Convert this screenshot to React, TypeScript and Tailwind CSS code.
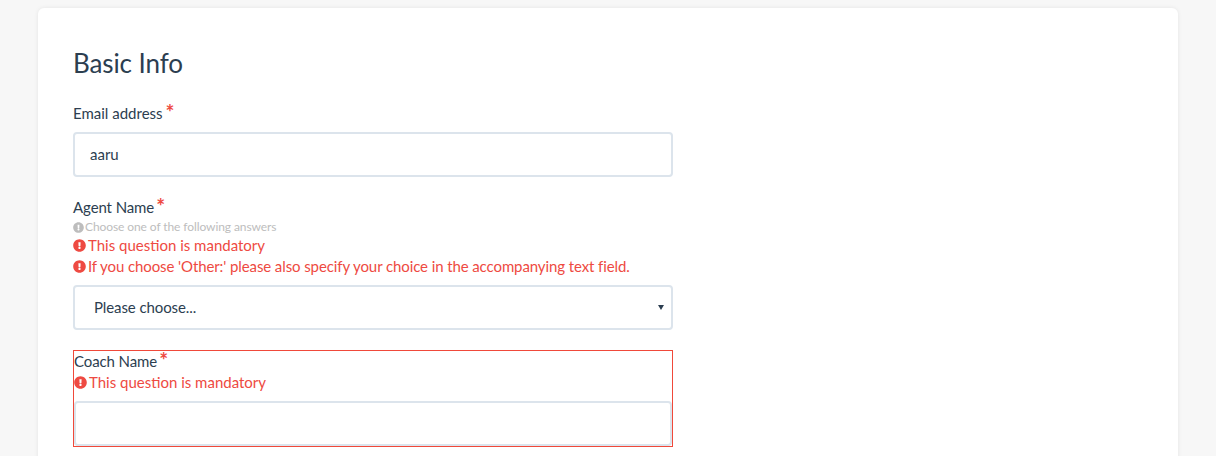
import { FaExclamationCircle } from "react-icons/fa";

function Req({ tight }: { tight?: boolean }) {
  return (
    <span className={tight ? "ml-[2px] h-[14px] -mt-[1px] text-[21px] leading-[20px] font-bold text-[#ee4a42]" : "ml-[3px] h-[14px] -mt-[1px] text-[21px] leading-[20px] font-bold text-[#ee4a42]"}>
      *
    </span>
  );
}

function Err({ children, tight }: { children: React.ReactNode; tight?: boolean }) {
  return (
    <div className={tight ? "flex items-center h-[21px] text-[15px] text-[#ee4a42] tracking-[-0.1px]" : "flex items-center h-[21px] text-[15px] text-[#ee4a42]"}>
      <FaExclamationCircle className="w-[13px] h-[13px] mr-[2px] shrink-0" />
      <span>{children}</span>
    </div>
  );
}

export default function App() {
  return (
    <div className="h-[456px] overflow-hidden bg-[#f7f7f7] pt-[8px] pl-[38px] pr-[38px] font-['Lato','Noto_Sans',sans-serif] text-[#2c3e50]">
      <div className="h-[600px] bg-white rounded-t-[6px] shadow-[0_0_4px_rgba(0,0,0,0.08)] pl-[35px] pt-[35px]">
        <div className="w-[600px]">
          <h1 className="text-[26px] leading-[40px] h-[40px] tracking-[-0.1px]">Basic Info</h1>
          <div className="mt-[20px] h-[20px] text-[15px] leading-[20px] flex items-start">
            <span>Email address</span>
            <Req />
          </div>
          <div className="mt-[9px] h-[45px] border-2 border-[#dce4ec] rounded-[4px] pl-[15px] flex items-center text-[15px]">
            aaru
          </div>
          <div className="mt-[20px] h-[20px] text-[15px] leading-[20px] flex items-start">
            <span className="tracking-[-0.1px]">Agent Name</span>
            <Req tight />
          </div>
          <div className="flex items-center h-[18px] pt-[2px] text-[12px] tracking-[-0.09px] text-[#bdbdbd]">
            <FaExclamationCircle className="w-[11px] h-[11px] mr-[1px] shrink-0" />
            <span>Choose one of the following answers</span>
          </div>
          <Err>This question is mandatory</Err>
          <Err tight>If you choose 'Other:' please also specify your choice in the accompanying text field.</Err>
          <div className="mt-[8px] h-[45px] border-2 border-[#dce4ec] rounded-[4px] pl-[19px] pr-[7px] flex items-center justify-between text-[15px] tracking-[-0.1px]">
            <span>Please choose...</span>
            <span className="w-0 h-0 border-l-[3px] border-r-[3px] border-t-[5px] border-l-transparent border-r-transparent border-t-[#2c3e50]" />
          </div>
          <div className="mt-[20px] h-[97px] border border-[#f0493a]">
            <div className="h-[20px] text-[15px] leading-[20px] flex items-start">
              <span className="tracking-[-0.1px]">Coach Name</span>
              <Req tight />
            </div>
            <div className="mt-[1px]">
              <Err>This question is mandatory</Err>
            </div>
            <div className="mt-[8px] h-[45px] border-2 border-[#dce4ec] rounded-[4px]" />
          </div>
        </div>
      </div>
    </div>
  );
}
